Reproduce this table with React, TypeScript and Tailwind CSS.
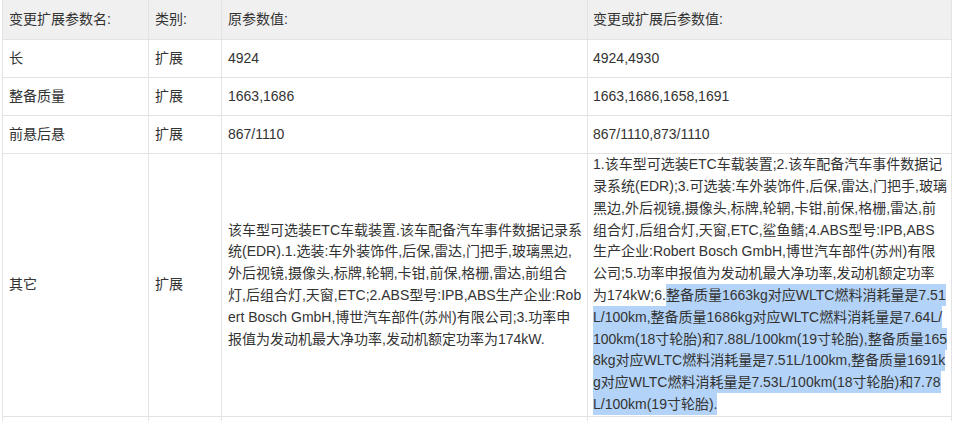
import React from "react";

const font = { fontFamily: '"Liberation Sans", "Noto Sans CJK SC", sans-serif' };

function Cell({
  children,
  className = "",
}: {
  children?: React.ReactNode;
  className?: string;
}) {
  return (
    <div
      className={
        "flex items-center border-r border-b border-[#e3e3e3] px-[6px] text-[14px] leading-[21.8px] text-[#333] " +
        className
      }
    >
      <div className="whitespace-nowrap">{children}</div>
    </div>
  );
}

const col3 = [
  "该车型可选装ETC车载装置.该车配备汽车事件数据记录系",
  "统(EDR).1.选装:车外装饰件,后保,雷达,门把手,玻璃黑边,",
  "外后视镜,摄像头,标牌,轮辋,卡钳,前保,格栅,雷达,前组合",
  "灯,后组合灯,天窗,ETC;2.ABS型号:IPB,ABS生产企业:Rob",
  "ert Bosch GmbH,博世汽车部件(苏州)有限公司;3.功率申",
  "报值为发动机最大净功率,发动机额定功率为174kW.",
];

const col4Plain = [
  "1.该车型可选装ETC车载装置;2.该车配备汽车事件数据记",
  "录系统(EDR);3.可选装:车外装饰件,后保,雷达,门把手,玻璃",
  "黑边,外后视镜,摄像头,标牌,轮辋,卡钳,前保,格栅,雷达,前",
  "组合灯,后组合灯,天窗,ETC,鲨鱼鳍;4.ABS型号:IPB,ABS",
  "生产企业:Robert Bosch GmbH,博世汽车部件(苏州)有限",
  "公司;5.功率申报值为发动机最大净功率,发动机额定功率",
];

const col4Sel = [
  "整备质量1663kg对应WLTC燃料消耗量是7.51",
  "L/100km,整备质量1686kg对应WLTC燃料消耗量是7.64L/",
  "100km(18寸轮胎)和7.88L/100km(19寸轮胎),整备质量165",
  "8kg对应WLTC燃料消耗量是7.51L/100km,整备质量1691k",
  "g对应WLTC燃料消耗量是7.53L/100km(18寸轮胎)和7.78",
  "L/100km(19寸轮胎).",
];

export default function App() {
  return (
    <div className="h-[421px] w-full overflow-hidden bg-white" style={font}>
      <div className="ml-[2px] grid w-[950px] grid-cols-[146px_73px_366px_364px] border-l border-[#e3e3e3]">
        {/* header */}
        <Cell className="h-[40px] bg-[#f0f0f0]">变更扩展参数名:</Cell>
        <Cell className="h-[40px] bg-[#f0f0f0]">类别:</Cell>
        <Cell className="h-[40px] bg-[#f0f0f0]">原参数值:</Cell>
        <Cell className="h-[40px] bg-[#f0f0f0] pl-[5px]">变更或扩展后参数值:</Cell>

        <Cell className="h-[38px]">长</Cell>
        <Cell className="h-[38px]">扩展</Cell>
        <Cell className="h-[38px]">4924</Cell>
        <Cell className="h-[38px] pl-[5px]">4924,4930</Cell>

        <Cell className="h-[38px]">整备质量</Cell>
        <Cell className="h-[38px]">扩展</Cell>
        <Cell className="h-[38px]">1663,1686</Cell>
        <Cell className="h-[38px] pl-[5px]">1663,1686,1658,1691</Cell>

        <Cell className="h-[38px]">前悬后悬</Cell>
        <Cell className="h-[38px]">扩展</Cell>
        <Cell className="h-[38px]">867/1110</Cell>
        <Cell className="h-[38px] pl-[5px]">867/1110,873/1110</Cell>

        <Cell className="h-[263px]">其它</Cell>
        <Cell className="h-[263px]">扩展</Cell>
        <Cell className="h-[263px]">
          {col3.map((l, i) => (
            <React.Fragment key={i}>
              {l}
              {i < col3.length - 1 && <br />}
            </React.Fragment>
          ))}
        </Cell>
        <Cell className="h-[263px] pl-[5px]">
          {col4Plain.map((l, i) => (
            <React.Fragment key={i}>
              {l}
              <br />
            </React.Fragment>
          ))}
          为174kW;6.
          <span className="bg-[#b3d3f8] py-[3.1px]">
            {col4Sel.map((l, i) => (
              <React.Fragment key={i}>
                {l}
                {i < col4Sel.length - 1 && <br />}
              </React.Fragment>
            ))}
          </span>
        </Cell>

        <Cell className="h-[30px]" />
        <Cell className="h-[30px]" />
        <Cell className="h-[30px]" />
        <Cell className="h-[30px]" />
      </div>
    </div>
  );
}
